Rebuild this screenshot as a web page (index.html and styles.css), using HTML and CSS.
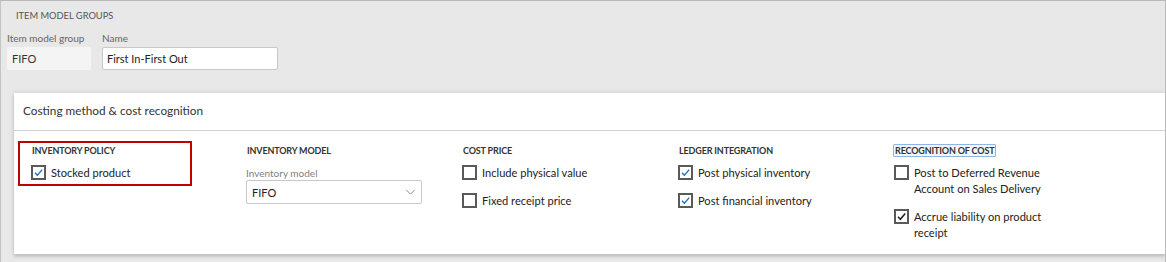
FILE: index.html
```html
<!DOCTYPE html>
<html>
<head>
<meta charset="utf-8">
<link rel="stylesheet" href="styles.css">
</head>
<body>
<div class="frame">
  <div class="page-title">ITEM MODEL GROUPS</div>
  <div class="fields">
    <div class="field">
      <div class="field-label">Item model group</div>
      <div class="readonly-box">FIFO</div>
    </div>
    <div class="field">
      <div class="field-label">Name</div>
      <div class="input-box">First In-First Out</div>
    </div>
  </div>
  <div class="card">
    <div class="card-header">Costing method &amp; cost recognition</div>
    <div class="card-body">
      <div class="col col-highlight">
        <div class="group-head">INVENTORY POLICY</div>
        <div class="check-row">
          <span class="box"><svg viewBox="0 0 11 11" class="tick blue"><path d="M2 5.8 L4.4 8.2 L9.2 2.6"/></svg></span>
          <span class="check-label">Stocked product</span>
        </div>
      </div>
      <div class="col">
        <div class="group-head">INVENTORY MODEL</div>
        <div class="small-label">Inventory model</div>
        <div class="select-box">
          <span>FIFO</span>
          <svg viewBox="0 0 12 7" class="chev"><path d="M1 1 L6 6 L11 1"/></svg>
        </div>
      </div>
      <div class="col">
        <div class="group-head">COST PRICE</div>
        <div class="check-row">
          <span class="box"></span>
          <span class="check-label">Include physical value</span>
        </div>
        <div class="check-row">
          <span class="box"></span>
          <span class="check-label">Fixed receipt price</span>
        </div>
      </div>
      <div class="col">
        <div class="group-head">LEDGER INTEGRATION</div>
        <div class="check-row">
          <span class="box"><svg viewBox="0 0 11 11" class="tick blue"><path d="M2 5.8 L4.4 8.2 L9.2 2.6"/></svg></span>
          <span class="check-label">Post physical inventory</span>
        </div>
        <div class="check-row">
          <span class="box"><svg viewBox="0 0 11 11" class="tick blue"><path d="M2 5.8 L4.4 8.2 L9.2 2.6"/></svg></span>
          <span class="check-label">Post financial inventory</span>
        </div>
      </div>
      <div class="col">
        <div class="group-head focused">RECOGNITION OF COST</div>
        <div class="check-row">
          <span class="box"></span>
          <span class="check-label">Post to Deferred Revenue<br>Account on Sales Delivery</span>
        </div>
        <div class="check-row">
          <span class="box"><svg viewBox="0 0 11 11" class="tick dark"><path d="M2 5.8 L4.4 8.2 L9.2 2.6"/></svg></span>
          <span class="check-label">Accrue liability on product<br>receipt</span>
        </div>
      </div>
    </div>
  </div>
</div>
</body>
</html>
```

FILE: styles.css
```css
html, body {
  margin: 0;
  padding: 0;
}
body {
  font-family: Lato, "Liberation Sans", sans-serif;
  color: #222;
  background: #e9e9e9;
}
.frame {
  width: 1166px;
  height: 262px;
  box-sizing: border-box;
  border-top: 1px solid #b9b9b9;
  border-left: 1px solid #c4c4c4;
  border-right: 1px solid #b9b9b9;
  background: #e8e8e8;
  overflow: hidden;
}
.page-title {
  padding: 8px 0 0 15px;
  font-size: 9.3px;
  line-height: 14px;
  color: #555;
}
.fields {
  display: flex;
  gap: 11px;
  padding: 9px 0 0 6px;
}
.field {
  display: flex;
  flex-direction: column;
  gap: 2px;
}
.field-label {
  font-size: 10px;
  line-height: 13px;
  color: #666;
}
.readonly-box {
  width: 84px;
  height: 23px;
  box-sizing: border-box;
  background: #f4f4f4;
  border-radius: 2px;
  font-size: 11px;
  line-height: 23px;
  padding-left: 5px;
  color: #333;
}
.input-box {
  width: 176px;
  height: 23px;
  box-sizing: border-box;
  background: #fff;
  border: 1px solid #c8c8c8;
  border-radius: 2px;
  font-size: 11px;
  line-height: 21px;
  padding-left: 4px;
  color: #222;
}
.card {
  margin: 23px 0 0 13px;
  height: 161px;
  background: #fff;
  box-shadow: 0 0 5px rgba(0, 0, 0, 0.13), 0 3px 3px rgba(0, 0, 0, 0.12);
}
.card-header {
  height: 38px;
  box-sizing: border-box;
  padding: 10px 0 0 9px;
  font-size: 11.8px;
  line-height: 16px;
  color: #333;
  border-bottom: 1px solid #d2d2d2;
}
.card-body {
  display: grid;
  grid-template-columns: 215px 216px 216px 216px 1fr;
  padding: 13px 0 0 17px;
}
.col {
  display: flex;
  flex-direction: column;
  align-items: flex-start;
}
.col-highlight {
  position: relative;
}
.col-highlight::after {
  content: "";
  position: absolute;
  left: -13px;
  top: -3px;
  width: 174px;
  height: 45px;
  box-sizing: border-box;
  border: 2px solid #c00000;
}
.group-head {
  font-size: 9px;
  font-weight: 700;
  letter-spacing: -0.15px;
  line-height: 11px;
  color: #333;
  border: 1px solid transparent;
  padding: 0 1px;
  margin-left: -1px;
  margin-bottom: 8px;
}
.group-head.focused {
  border-color: #8fb4e6;
  background: #f2f7fd;
  border-radius: 1px;
}
.check-row {
  display: flex;
  align-items: flex-start;
  gap: 5px;
  margin-bottom: 12px;
}
.box {
  width: 15px;
  height: 15px;
  box-sizing: border-box;
  border: 2px solid #5a5a5a;
  background: #fff;
  display: flex;
  align-items: center;
  justify-content: center;
  flex: none;
}
.tick {
  width: 11px;
  height: 11px;
  fill: none;
  stroke-width: 1.4;
}
.tick.blue {
  stroke: #1f6fc5;
}
.tick.dark {
  stroke: #222;
  stroke-width: 1.6;
}
.check-label {
  font-size: 11.1px;
  line-height: 16px;
  color: #222;
}
.small-label {
  font-size: 10px;
  line-height: 14px;
  color: #808080;
  margin-top: 1px;
}
.select-box {
  width: 176px;
  height: 24px;
  box-sizing: border-box;
  border: 1px solid #c8c8c8;
  border-radius: 2px;
  display: flex;
  align-items: center;
  justify-content: space-between;
  padding: 0 5px 0 5px;
  font-size: 11px;
  color: #222;
}
.chev {
  width: 11px;
  height: 6px;
  fill: none;
  stroke: #777;
  stroke-width: 1;
}
```
